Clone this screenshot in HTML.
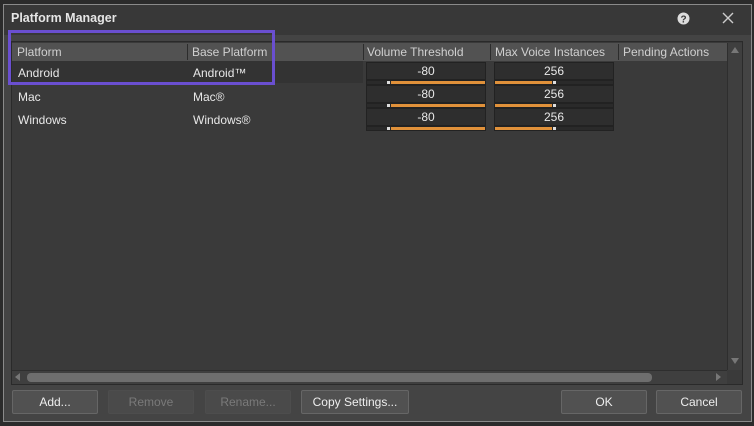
<!DOCTYPE html>
<html><head><style>
*{margin:0;padding:0;box-sizing:border-box}
body{width:754px;height:426px;background:#2b2b2b;font-family:"Liberation Sans",sans-serif;font-size:12px;color:#e0e0e0;position:relative;overflow:hidden}
.a{position:absolute}
.win{left:3px;top:4px;width:749px;height:418px;border:1px solid #8a8a8a;background:#444}
.title{left:4px;top:5px;width:747px;height:30px;background:#383838}
.grid{left:11px;top:41px;width:732px;height:344px;background:#3a3a3a;border:1px solid #2a2a2a}
.hdr{left:12px;top:43px;width:715px;height:18px;background:#525252;color:#d0d0d0}
.hdr span{position:absolute;top:2px}
.div{position:absolute;top:1px;width:1px;height:16px;background:#2c2c2c}
.cell{color:#e8e8e8}
.box{background:#2e2e2e;border:1px solid #222;height:18px;text-align:center;line-height:16px;color:#e8e8e8}
.bar{height:5px;background:#2a2a2a;border:1px solid #222}
.or{background:#e0913a;height:3px}
.kn{background:#ddd;width:3px;height:3px}
.btn{top:390px;height:24px;background:#515151;border:1px solid #666;border-radius:2px;text-align:center;line-height:22px;color:#eee}
.dis{background:#4a4a4a;border-color:#4d4d4d;color:#7a7a7a}
</style></head><body>
<div class="a win"></div>
<div class="a title"></div>
<div class="a" style="left:11px;top:11px;font-weight:bold;color:#e6e6e6;font-size:12.5px">Platform Manager</div>
<svg class="a" style="left:677px;top:12px" width="13" height="13"><circle cx="6.5" cy="6.5" r="6" fill="#ddd"/><text x="6.5" y="10.5" text-anchor="middle" font-family="Liberation Sans" font-weight="bold" font-size="10" fill="#383838">?</text></svg>
<svg class="a" style="left:722px;top:12px" width="12" height="12"><path d="M1 1L11 11M11 1L1 11" stroke="#ccc" stroke-width="1.4"/></svg>
<div class="a grid"></div>
<div class="a hdr">
<span style="left:5px">Platform</span><div class="div" style="left:175px"></div>
<span style="left:180px">Base Platform</span><div class="div" style="left:351px"></div>
<span style="left:355px">Volume Threshold</span><div class="div" style="left:478px"></div>
<span style="left:483px">Max Voice Instances</span><div class="div" style="left:606px"></div>
<span style="left:611px">Pending Actions</span>
</div>
<div class="a" style="left:12px;top:61px;width:351px;height:22px;background:#333"></div>
<div class="a cell" style="left:18px;top:66px">Android</div><div class="a cell" style="left:193px;top:66px">Android™</div>
<div class="a cell" style="left:18px;top:90px">Mac</div><div class="a cell" style="left:193px;top:90px">Mac®</div>
<div class="a cell" style="left:18px;top:113px">Windows</div><div class="a cell" style="left:193px;top:113px">Windows®</div>

<div class="a" style="left:366px;top:62px;width:120px">
 <div class="box">-80</div><div class="bar" style="position:relative"><div class="a kn" style="left:20px;top:0"></div><div class="a or" style="left:24px;right:0;top:0"></div></div>
</div>
<div class="a" style="left:366px;top:85px;width:120px">
 <div class="box">-80</div><div class="bar" style="position:relative"><div class="a kn" style="left:20px;top:0"></div><div class="a or" style="left:24px;right:0;top:0"></div></div>
</div>
<div class="a" style="left:366px;top:108px;width:120px">
 <div class="box">-80</div><div class="bar" style="position:relative"><div class="a kn" style="left:20px;top:0"></div><div class="a or" style="left:24px;right:0;top:0"></div></div>
</div>
<div class="a" style="left:494px;top:62px;width:120px">
 <div class="box">256</div><div class="bar" style="position:relative"><div class="a or" style="left:0;width:57px;top:0"></div><div class="a kn" style="left:58px;top:0"></div></div>
</div>
<div class="a" style="left:494px;top:85px;width:120px">
 <div class="box">256</div><div class="bar" style="position:relative"><div class="a or" style="left:0;width:57px;top:0"></div><div class="a kn" style="left:58px;top:0"></div></div>
</div>
<div class="a" style="left:494px;top:108px;width:120px">
 <div class="box">256</div><div class="bar" style="position:relative"><div class="a or" style="left:0;width:57px;top:0"></div><div class="a kn" style="left:58px;top:0"></div></div>
</div>

<div class="a" style="left:727px;top:43px;width:15px;height:327px;background:#3f3f3f;border-left:1px solid #2e2e2e"></div>
<div class="a" style="left:731px;top:47px;width:0;height:0;border-left:4px solid transparent;border-right:4px solid transparent;border-bottom:6px solid #777"></div>
<div class="a" style="left:731px;top:358px;width:0;height:0;border-left:4px solid transparent;border-right:4px solid transparent;border-top:6px solid #777"></div>
<div class="a" style="left:12px;top:370px;width:715px;height:14px;background:#3f3f3f;border-top:1px solid #2e2e2e"></div>
<div class="a" style="left:15px;top:373px;width:0;height:0;border-top:4px solid transparent;border-bottom:4px solid transparent;border-right:5px solid #777"></div>
<div class="a" style="left:716px;top:373px;width:0;height:0;border-top:4px solid transparent;border-bottom:4px solid transparent;border-left:5px solid #777"></div>
<div class="a" style="left:27px;top:373px;width:625px;height:9px;background:#6e6e6e;border-radius:4px"></div>

<div class="a" style="left:8px;top:30px;width:267px;height:55px;border:3px solid #6a4fd0"></div>

<div class="a btn" style="left:12px;width:86px">Add...</div>
<div class="a btn dis" style="left:108px;width:86px">Remove</div>
<div class="a btn dis" style="left:205px;width:86px">Rename...</div>
<div class="a btn" style="left:301px;width:108px">Copy Settings...</div>
<div class="a btn" style="left:561px;width:86px">OK</div>
<div class="a btn" style="left:656px;width:86px">Cancel</div>
</body></html>
